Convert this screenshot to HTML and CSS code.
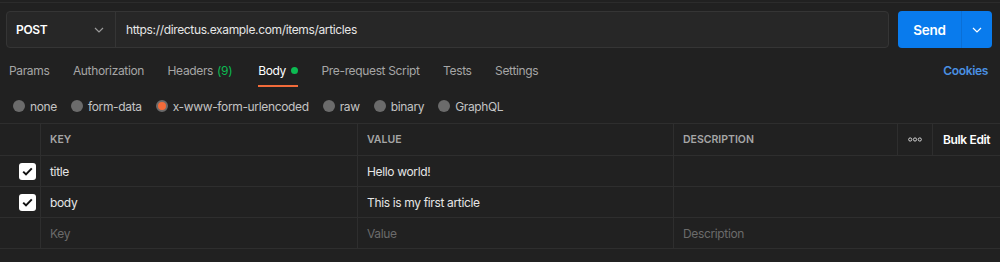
FILE: index.html
```html
<!DOCTYPE html>
<html>
<head>
<meta charset="utf-8">
<link rel="stylesheet" href="styles.css">
</head>
<body>
<div class="app">
  <div class="topbar">
    <div class="req-box">
      <div class="method">
        <span>POST</span>
        <svg class="chev" width="10" height="6" viewBox="0 0 10 6"><path d="M1 1l4 4 4-4" fill="none" stroke="#9a9a9a" stroke-width="1.2"/></svg>
      </div>
      <div class="url">https://directus.example.com/items/articles</div>
    </div>
    <div class="send">
      <span class="send-label">Send</span>
      <span class="send-drop"><svg width="10" height="6" viewBox="0 0 10 6"><path d="M1 1l4 4 4-4" fill="none" stroke="#ffffff" stroke-width="1.2"/></svg></span>
    </div>
  </div>

  <div class="tabs">
    <div class="tab-list">
      <span class="tab">Params</span>
      <span class="tab">Authorization</span>
      <span class="tab">Headers <span class="count">(9)</span></span>
      <span class="tab active">Body <span class="dot"></span></span>
      <span class="tab">Pre-request Script</span>
      <span class="tab">Tests</span>
      <span class="tab">Settings</span>
    </div>
    <span class="cookies">Cookies</span>
  </div>

  <div class="radios">
    <span class="radio"><span class="circle"></span>none</span>
    <span class="radio"><span class="circle"></span>form-data</span>
    <span class="radio"><span class="circle on"></span>x-www-form-urlencoded</span>
    <span class="radio"><span class="circle"></span>raw</span>
    <span class="radio"><span class="circle"></span>binary</span>
    <span class="radio"><span class="circle"></span>GraphQL</span>
  </div>

  <div class="table">
    <div class="row head">
      <div class="cell"></div>
      <div class="cell">KEY</div>
      <div class="cell">VALUE</div>
      <div class="cell">DESCRIPTION</div>
      <div class="cell more"><svg width="14" height="5" viewBox="0 0 14 5"><circle cx="2.2" cy="2.5" r="1.6" fill="none" stroke="#cfcfcf" stroke-width="1"/><circle cx="7" cy="2.5" r="1.6" fill="none" stroke="#cfcfcf" stroke-width="1"/><circle cx="11.8" cy="2.5" r="1.6" fill="none" stroke="#cfcfcf" stroke-width="1"/></svg></div>
      <div class="cell bulk">Bulk Edit</div>
    </div>
    <div class="row body-row">
      <div class="cell check-cell"><span class="check"><svg width="11" height="9" viewBox="0 0 11 9"><path d="M1.2 4.6l2.8 2.8 5.8-6" fill="none" stroke="#111" stroke-width="2"/></svg></span></div>
      <div class="cell">title</div>
      <div class="cell">Hello world!</div>
      <div class="cell"></div>
    </div>
    <div class="row body-row">
      <div class="cell check-cell"><span class="check"><svg width="11" height="9" viewBox="0 0 11 9"><path d="M1.2 4.6l2.8 2.8 5.8-6" fill="none" stroke="#111" stroke-width="2"/></svg></span></div>
      <div class="cell">body</div>
      <div class="cell">This is my first article</div>
      <div class="cell"></div>
    </div>
    <div class="row body-row placeholder">
      <div class="cell"></div>
      <div class="cell">Key</div>
      <div class="cell">Value</div>
      <div class="cell">Description</div>
    </div>
  </div>
</div>
</body>
</html>
```

FILE: styles.css
```css
* { box-sizing: border-box; }
html, body {
  margin: 0;
  background: #212121;
}
body {
  font-family: Inter, "Noto Sans", sans-serif;
  font-size: 12px;
  letter-spacing: -0.35px;
  color: #e6e6e6;
  width: 1000px;
  height: 262px;
  overflow: hidden;
}
.app {
  border-top: 1px solid #2c2c2c;
  margin-top: 2px;
}
.topbar {
  display: flex;
  padding: 8px 8px 0 6px;
  height: 45px;
}
.req-box {
  flex: 1;
  display: flex;
  border: 1px solid #353535;
  border-radius: 4px;
  background: #272727;
}
.method {
  width: 109px;
  display: flex;
  align-items: center;
  justify-content: space-between;
  padding: 0 11px 0 9px;
  font-weight: 600;
  color: #ffffff;
  border-right: 1px solid #353535;
}
.url {
  flex: 1;
  display: flex;
  align-items: center;
  padding-left: 10px;
  color: #e6e6e6;
}
.send {
  margin-left: 9px;
  width: 94px;
  display: flex;
  background: #097bed;
  border-radius: 4px;
  color: #fff;
}
.send-label {
  width: 64px;
  display: flex;
  align-items: center;
  justify-content: center;
  font-weight: 600;
  font-size: 13.5px;
  letter-spacing: -0.2px;
  border-right: 1px solid #0a6fd6;
}
.send-drop {
  flex: 1;
  display: flex;
  align-items: center;
  justify-content: center;
}
.tabs {
  display: flex;
  justify-content: space-between;
  align-items: stretch;
  height: 39px;
  padding: 0 12px 0 9px;
}
.tab-list {
  display: flex;
  gap: 23.5px;
}
.tab {
  display: flex;
  align-items: center;
  color: #a6a6a6;
  border-bottom: 2px solid transparent;
  padding-top: 8px;
  white-space: nowrap;
}
.tab.active {
  color: #ffffff;
  border-bottom-color: #f26b3a;
  margin-left: 2.5px;
}
.count {
  color: #0cbb52;
  margin-left: 4px;
}
.dot {
  width: 7px;
  height: 7px;
  border-radius: 50%;
  background: #0cbb52;
  margin-left: 5px;
}
.cookies {
  display: flex;
  align-items: center;
  color: #4a90e2;
  font-weight: 600;
  padding-top: 8px;
  padding-bottom: 2px;
}
.radios {
  display: flex;
  align-items: center;
  height: 36px;
  padding-left: 13px;
  padding-top: 2px;
  gap: 14px;
  color: #c4c4c4;
}
.radio {
  display: flex;
  align-items: center;
  gap: 5px;
}
.circle {
  width: 12px;
  height: 12px;
  border-radius: 50%;
  background: #6b6b6b;
}
.circle.on {
  background: #f26b3a;
  border: 2.5px solid #6b6b6b;
}
.table {
  border-top: 1px solid #2e2e2e;
}
.row {
  display: grid;
  grid-template-columns: 40px 317px 316px 224px 35px 68px;
  border-bottom: 1px solid #2e2e2e;
}
.body-row {
  grid-template-columns: 40px 317px 316px 327px;
  height: 31px;
}
.row.head {
  height: 32px;
}
.cell {
  display: flex;
  align-items: center;
  padding-left: 9px;
  border-left: 1px solid #2e2e2e;
}
.cell:first-child {
  border-left: none;
  padding-left: 0;
}
.head .cell {
  font-size: 10.5px;
  font-weight: 600;
  color: #a6a6a6;
  letter-spacing: 0;
}
.head .more {
  justify-content: center;
  padding-left: 0;
}
.head .bulk {
  color: #ffffff;
  font-size: 12px;
  letter-spacing: -0.35px;
  padding-left: 10px;
}
.check-cell {
  justify-content: flex-end;
  padding-right: 4px;
}
.check {
  width: 17px;
  height: 17px;
  border-radius: 3px;
  background: #ffffff;
  display: flex;
  align-items: center;
  justify-content: center;
}
.placeholder .cell {
  color: #6b6b6b;
}
```
